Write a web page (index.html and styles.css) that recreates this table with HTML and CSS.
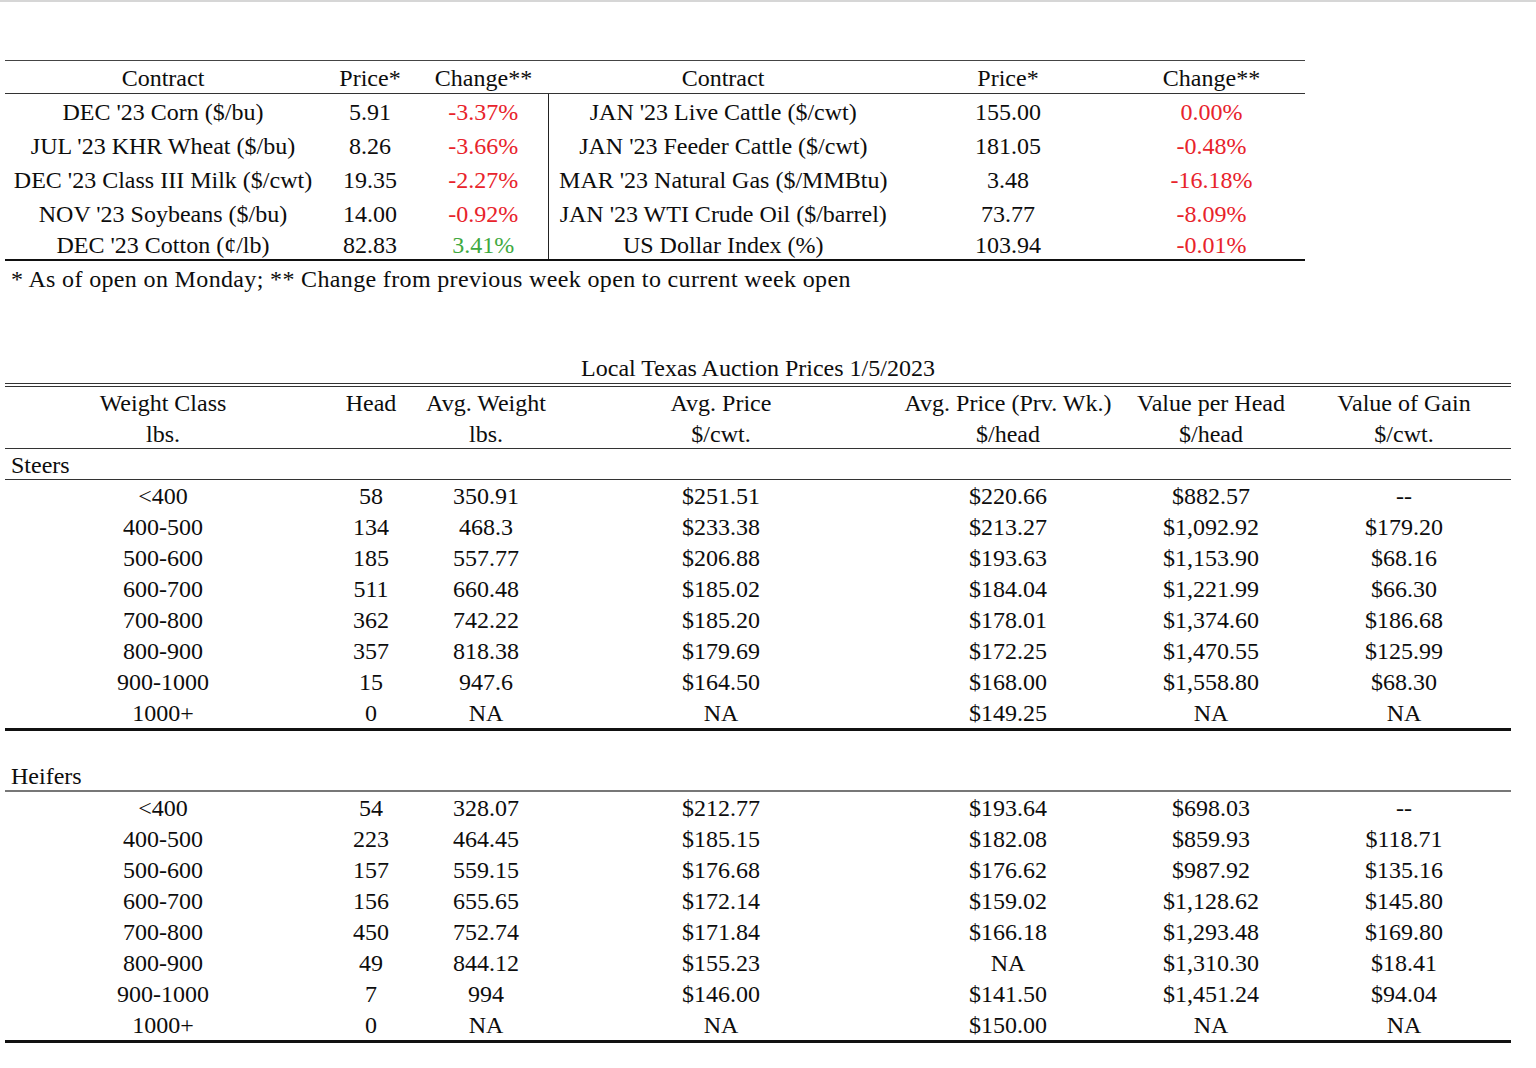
FILE: index.html
```html
<!DOCTYPE html>
<html lang="en">
<head>
  <meta charset="UTF-8">
  <title>Market Prices</title>
  <link rel="stylesheet" href="styles.css">
</head>
<body>

  <!-- FUTURES TABLE -->
  <table class="futures">
    <colgroup>
      <col style="width:316px">
      <col style="width:98px">
      <col style="width:129px">
      <col style="width:350px">
      <col style="width:220px">
      <col style="width:187px">
    </colgroup>
    <thead>
      <tr>
        <th>Contract</th><th>Price*</th><th>Change**</th>
        <th>Contract</th><th>Price*</th><th>Change**</th>
      </tr>
    </thead>
    <tbody>
      <tr>
        <td>DEC '23 Corn ($/bu)</td><td>5.91</td><td class="down split">-3.37%</td>
        <td>JAN '23 Live Cattle ($/cwt)</td><td>155.00</td><td class="down">0.00%</td>
      </tr>
      <tr>
        <td>JUL '23 KHR Wheat ($/bu)</td><td>8.26</td><td class="down split">-3.66%</td>
        <td>JAN '23 Feeder Cattle ($/cwt)</td><td>181.05</td><td class="down">-0.48%</td>
      </tr>
      <tr>
        <td>DEC '23 Class III Milk ($/cwt)</td><td>19.35</td><td class="down split">-2.27%</td>
        <td>MAR '23 Natural Gas ($/MMBtu)</td><td>3.48</td><td class="down">-16.18%</td>
      </tr>
      <tr class="short">
        <td>NOV '23 Soybeans ($/bu)</td><td>14.00</td><td class="down split">-0.92%</td>
        <td>JAN '23 WTI Crude Oil ($/barrel)</td><td>73.77</td><td class="down">-8.09%</td>
      </tr>
      <tr class="final">
        <td>DEC '23 Cotton (¢/lb)</td><td>82.83</td><td class="up split">3.41%</td>
        <td>US Dollar Index (%)</td><td>103.94</td><td class="down">-0.01%</td>
      </tr>
    </tbody>
  </table>
  <p class="note">* As of open on Monday; ** Change from previous week open to current week open</p>

  <!-- AUCTION TABLE -->
  <div class="auction-title">Local Texas Auction Prices 1/5/2023</div>
  <table class="auction">
    <colgroup>
      <col style="width:316px">
      <col style="width:100px">
      <col style="width:130px">
      <col style="width:340px">
      <col style="width:234px">
      <col style="width:172px">
      <col style="width:214px">
    </colgroup>
    <thead>
      <tr class="head-top">
        <th>Weight Class</th><th>Head</th><th>Avg. Weight</th><th>Avg. Price</th>
        <th>Avg. Price (Prv. Wk.)</th><th>Value per Head</th><th>Value of Gain</th>
      </tr>
      <tr class="head-units">
        <th>lbs.</th><th></th><th>lbs.</th><th>$/cwt.</th>
        <th>$/head</th><th>$/head</th><th>$/cwt.</th>
      </tr>
    </thead>
    <tbody>
      <tr class="group"><td colspan="7">Steers</td></tr>
      <tr><td>&lt;400</td><td>58</td><td>350.91</td><td>$251.51</td><td>$220.66</td><td>$882.57</td><td>--</td></tr>
      <tr><td>400-500</td><td>134</td><td>468.3</td><td>$233.38</td><td>$213.27</td><td>$1,092.92</td><td>$179.20</td></tr>
      <tr><td>500-600</td><td>185</td><td>557.77</td><td>$206.88</td><td>$193.63</td><td>$1,153.90</td><td>$68.16</td></tr>
      <tr><td>600-700</td><td>511</td><td>660.48</td><td>$185.02</td><td>$184.04</td><td>$1,221.99</td><td>$66.30</td></tr>
      <tr><td>700-800</td><td>362</td><td>742.22</td><td>$185.20</td><td>$178.01</td><td>$1,374.60</td><td>$186.68</td></tr>
      <tr><td>800-900</td><td>357</td><td>818.38</td><td>$179.69</td><td>$172.25</td><td>$1,470.55</td><td>$125.99</td></tr>
      <tr><td>900-1000</td><td>15</td><td>947.6</td><td>$164.50</td><td>$168.00</td><td>$1,558.80</td><td>$68.30</td></tr>
      <tr class="last"><td>1000+</td><td>0</td><td>NA</td><td>NA</td><td>$149.25</td><td>NA</td><td>NA</td></tr>
      <tr class="spacer"><td colspan="7">&nbsp;</td></tr>
      <tr class="group heifers"><td colspan="7">Heifers</td></tr>
      <tr><td>&lt;400</td><td>54</td><td>328.07</td><td>$212.77</td><td>$193.64</td><td>$698.03</td><td>--</td></tr>
      <tr><td>400-500</td><td>223</td><td>464.45</td><td>$185.15</td><td>$182.08</td><td>$859.93</td><td>$118.71</td></tr>
      <tr><td>500-600</td><td>157</td><td>559.15</td><td>$176.68</td><td>$176.62</td><td>$987.92</td><td>$135.16</td></tr>
      <tr><td>600-700</td><td>156</td><td>655.65</td><td>$172.14</td><td>$159.02</td><td>$1,128.62</td><td>$145.80</td></tr>
      <tr><td>700-800</td><td>450</td><td>752.74</td><td>$171.84</td><td>$166.18</td><td>$1,293.48</td><td>$169.80</td></tr>
      <tr><td>800-900</td><td>49</td><td>844.12</td><td>$155.23</td><td>NA</td><td>$1,310.30</td><td>$18.41</td></tr>
      <tr><td>900-1000</td><td>7</td><td>994</td><td>$146.00</td><td>$141.50</td><td>$1,451.24</td><td>$94.04</td></tr>
      <tr class="end"><td>1000+</td><td>0</td><td>NA</td><td>NA</td><td>$150.00</td><td>NA</td><td>NA</td></tr>
    </tbody>
  </table>

</body>
</html>
```

FILE: styles.css
```css
body {
  margin: 0;
  padding: 0 5px;
  border-top: 2px solid #d6d6d6;
  background: #fff;
  color: #0d0d0d;
  font-family: "Liberation Serif", "Times New Roman", serif;
  font-size: 24px;
  overflow: hidden;
}

table {
  border-collapse: collapse;
  table-layout: fixed;
}
th, td {
  padding: 0;
  text-align: center;
  vertical-align: middle;
  font-weight: normal;
  white-space: nowrap;
}

/* futures */
.futures {
  width: 1300px;
  margin-top: 58px;
  border-top: 1px solid #444;
  border-bottom: 2px solid #111;
}
.futures th {
  line-height: 30px;
  padding-top: 2px;
  border-bottom: 1px solid #333;
}
.futures td {
  line-height: 31px;
  padding-top: 3px;
}
.futures .short td {
  line-height: 30px;
}
.futures .final td {
  line-height: 28px;
  padding-top: 2px;
}
.futures td.split {
  border-right: 1px solid #222;
}
.down {
  color: #e8232b;
}
.up {
  color: #3fa93f;
}

.note {
  margin: 0 0 0 6px;
  height: 34px;
  line-height: 36px;
  letter-spacing: 0.35px;
}

/* auction */
.auction-title {
  width: 1506px;
  margin-top: 56px;
  height: 32px;
  line-height: 34px;
  text-align: center;
}
.auction {
  width: 1506px;
}
.auction .head-top th {
  line-height: 27px;
  padding-top: 3px;
  border-top: 4px double #333;
}
.auction .head-units th {
  line-height: 27px;
  padding-top: 4px;
  border-bottom: 1px solid #333;
}
.auction td {
  line-height: 29px;
  padding-top: 2px;
}
.auction .group td {
  line-height: 27px;
  padding-top: 3px;
  text-align: left;
  padding-left: 6px;
  border-bottom: 1px solid #333;
}
.auction .last td {
  border-bottom: 3px solid #111;
}
.auction .spacer td {
  line-height: 28px;
  padding-top: 0;
}
.auction .heifers td {
  line-height: 28px;
  padding-top: 3px;
  border-bottom: 2px solid #777;
}
.auction .end td {
  border-bottom: 3px solid #111;
}
```
